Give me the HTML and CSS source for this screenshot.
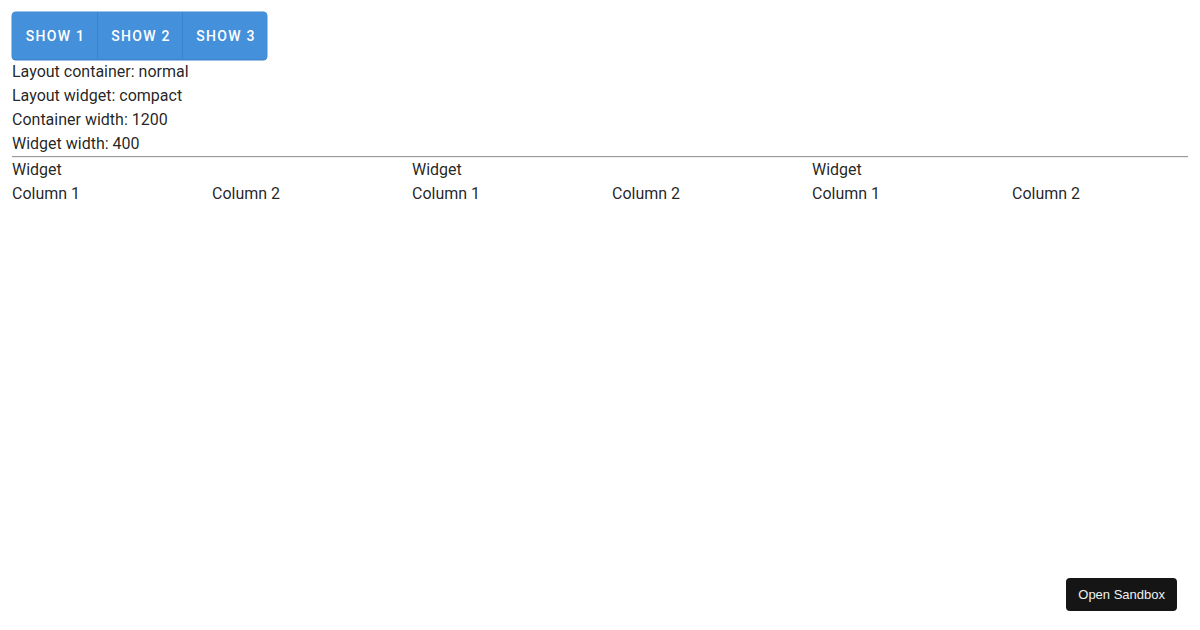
FILE: index.html
```html
<!DOCTYPE html>
<html>
<head>
<meta charset="utf-8">
<link rel="stylesheet" href="styles.css">
</head>
<body>
<div class="page">
  <div class="btn-group">
    <button class="btn">Show 1</button>
    <button class="btn">Show 2</button>
    <button class="btn">Show 3</button>
  </div>
  <div class="line">Layout container: normal</div>
  <div class="line">Layout widget: compact</div>
  <div class="line">Container width: 1200</div>
  <div class="line">Widget width: 400</div>
  <hr class="rule">
  <div class="widgets">
    <div class="widget">
      <div class="line">Widget</div>
      <div class="cols"><div class="line">Column 1</div><div class="line">Column 2</div></div>
    </div>
    <div class="widget">
      <div class="line">Widget</div>
      <div class="cols"><div class="line">Column 1</div><div class="line">Column 2</div></div>
    </div>
    <div class="widget">
      <div class="line">Widget</div>
      <div class="cols"><div class="line">Column 1</div><div class="line">Column 2</div></div>
    </div>
  </div>
</div>
<a class="sandbox">Open Sandbox</a>
</body>
</html>
```
FILE: styles.css
```css
html, body {
  margin: 0;
  padding: 0;
  background: #fff;
}
body {
  font-family: Roboto, "Liberation Sans", sans-serif;
  font-size: 16px;
  line-height: 24px;
  color: rgba(0,0,0,0.87);
}
.page {
  padding: 12px;
}
.btn-group {
  display: inline-flex;
  background: #4590db;
  border-radius: 4px;
  box-shadow: inset 0 -1px 0 #3d84cd, 0 0 0 0.5px #3f86cf;
  overflow: hidden;
  height: 48px;
}
.btn {
  box-sizing: border-box;
  width: 85px;
  height: 47px;
  border: 0;
  background: #4590db;
  color: #fff;
  font-family: Roboto, "Liberation Sans", sans-serif;
  font-weight: 500;
  font-size: 14px;
  letter-spacing: 1.25px;
  text-transform: uppercase;
  padding: 0 0 0 2px;
  margin: 0;
}
.btn + .btn {
  border-left: 1px solid #3b82cc;
}
.line {
  height: 24px;
}
.rule {
  margin: 0;
  border-width: 1px 0 0 0;
  border-style: solid;
  border-color: #999;
  border-bottom: 1px solid #eee;
  height: 0;
}
.widgets {
  display: flex;
}
.widget {
  width: 400px;
  flex: none;
}
.cols {
  display: flex;
}
.cols .line {
  width: 200px;
}
.sandbox {
  position: fixed;
  right: 23px;
  bottom: 19px;
  background: #151515;
  color: #f0f0f0;
  font-family: "Liberation Sans", Arial, sans-serif;
  font-size: 13px;
  line-height: 33px;
  height: 33px;
  padding: 0 12px;
  border-radius: 4px;
}
```
